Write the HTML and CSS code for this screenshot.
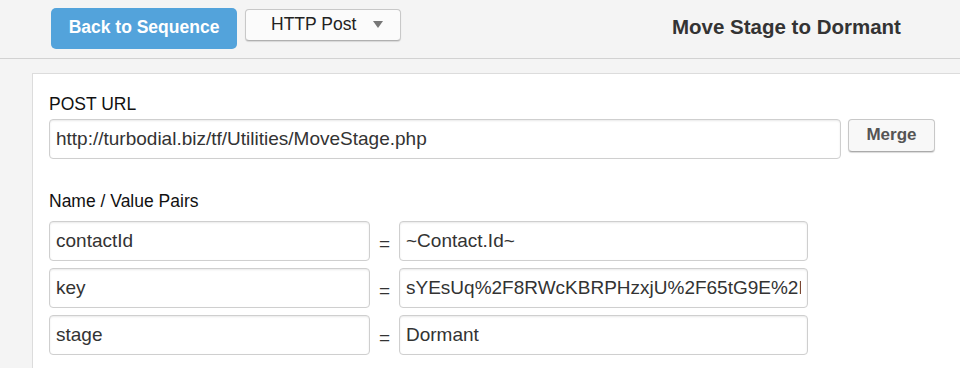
FILE: index.html
```html
<!DOCTYPE html>
<html>
<head>
<meta charset="utf-8">
<link rel="stylesheet" href="styles.css">
</head>
<body>
<div class="topbar">
  <button class="btn-primary">Back to Sequence</button>
  <div class="select">HTTP Post <span class="caret"></span></div>
  <h1 class="title">Move Stage to Dormant</h1>
</div>
<div class="panel">
  <div class="label">POST URL</div>
  <div class="url-row">
    <input class="field url" type="text" value="http://turbodial.biz/tf/Utilities/MoveStage.php">
    <button class="btn">Merge</button>
  </div>
  <div class="label pairs-label">Name / Value Pairs</div>
  <div class="pairs">
    <div class="pair">
      <input class="field name" type="text" value="contactId">
      <span class="eq">=</span>
      <input class="field value" type="text" value="~Contact.Id~">
    </div>
    <div class="pair">
      <input class="field name" type="text" value="key">
      <span class="eq">=</span>
      <input class="field value" type="text" value="sYEsUq%2F8RWcKBRPHzxjU%2F65tG9E%2FkL3pQx">
    </div>
    <div class="pair">
      <input class="field name" type="text" value="stage">
      <span class="eq">=</span>
      <input class="field value" type="text" value="Dormant">
    </div>
  </div>
</div>
</body>
</html>
```
FILE: styles.css
```css
* { box-sizing: border-box; }
html, body {
  margin: 0;
  padding: 0;
  background: #f4f4f4;
  font-family: "Liberation Sans", Arial, Helvetica, sans-serif;
  color: #222;
  overflow: hidden;
}
.topbar {
  height: 59px;
  border-bottom: 1px solid #d2d2d2;
  display: flex;
  align-items: flex-start;
  padding-left: 51px;
}
.btn-primary {
  margin-top: 8px;
  width: 186px;
  height: 41px;
  background: #53a3db;
  border: none;
  border-radius: 5px;
  color: #fff;
  font-family: inherit;
  font-size: 17.5px;
  font-weight: bold;
  padding: 0 0 2px;
}
.select {
  margin-top: 9px;
  margin-left: 8px;
  width: 156px;
  height: 32px;
  background: #fbfbfb;
  border: 1px solid #c8c8c8;
  border-bottom-color: #b0b0b0;
  border-radius: 4px;
  box-shadow: 0 1px 1px rgba(0,0,0,0.12);
  font-size: 17.5px;
  color: #222;
  padding: 4px 0 0 25px;
  position: relative;
}
.caret {
  position: absolute;
  left: 127px;
  top: 11px;
  width: 0;
  height: 0;
  border-left: 5px solid transparent;
  border-right: 5px solid transparent;
  border-top: 7px solid #777;
}
.title {
  margin: 0 0 0 271px;
  padding-top: 15px;
  font-size: 20.5px;
  font-weight: bold;
  color: #333;
  line-height: 24px;
}
.panel {
  margin: 14px 0 0 32px;
  background: #fff;
  border: 1px solid #dcdcdc;
  border-right: none;
  padding: 20px 0 40px 16px;
}
.label {
  font-size: 17.5px;
  color: #111;
  line-height: 20px;
}
.url-row {
  display: flex;
  align-items: flex-start;
  gap: 7px;
  margin-top: 5px;
}
.field {
  height: 40px;
  border: 1px solid #cfcfcf;
  border-radius: 4px;
  box-shadow: inset 0 1px 2px rgba(0,0,0,0.09);
  font-family: inherit;
  font-size: 19px;
  color: #333;
  padding: 0 6px;
  background: #fff;
  outline: none;
  margin: 0;
}
.url { width: 792px; }
.btn {
  width: 87px;
  height: 33px;
  background: #f8f8f8;
  border: 1px solid #c8c8c8;
  border-bottom-color: #aaa;
  border-radius: 4px;
  box-shadow: 0 1px 1px rgba(0,0,0,0.15);
  font-family: inherit;
  font-size: 17px;
  font-weight: bold;
  color: #555;
  padding: 0 0 2px;
}
.pairs-label {
  margin-top: 32px;
}
.pairs {
  margin-top: 10px;
  display: flex;
  flex-direction: column;
  gap: 7px;
}
.pair {
  display: flex;
  align-items: flex-end;
}
.name { width: 321px; }
.eq {
  width: 29px;
  text-align: center;
  font-size: 19px;
  color: #333;
  padding-bottom: 6px;
}
.value { width: 409px; }
```
